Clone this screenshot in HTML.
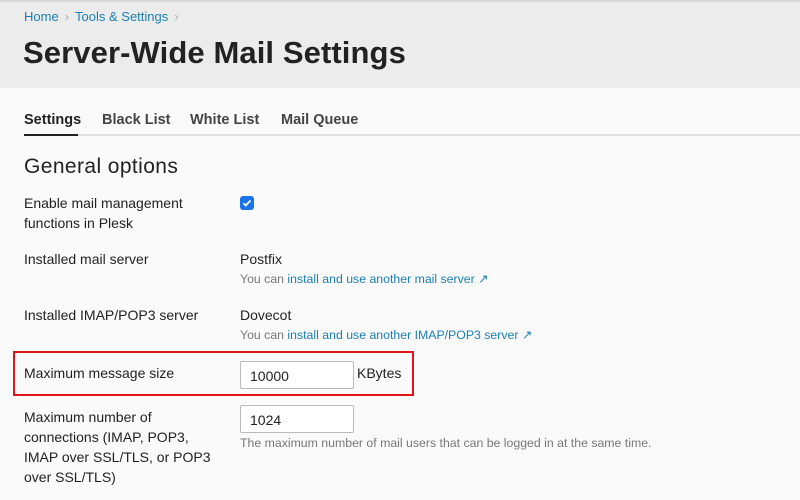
<!DOCTYPE html>
<html><head><meta charset="utf-8"><style>
*{margin:0;padding:0;box-sizing:border-box}
body{width:800px;height:500px;overflow:hidden;background:#fafafa;font-family:"Liberation Sans",sans-serif;color:#222;position:relative}
.hdr{position:absolute;left:0;top:0;width:800px;height:88px;background:#ececec;border-top:2px solid #d8d8d8}
.a{position:absolute;white-space:nowrap}
.bc{top:9px;left:24px;font-size:13px;color:#1a7fb3}
.bc span{color:#aaa;margin:0 6px}
h1{position:absolute;left:23px;top:35px;font-size:31px;font-weight:bold;color:#222;letter-spacing:0.1px}
.tabs{top:112px;font-size:14.5px;font-weight:bold;color:#444}
.line{position:absolute;left:24px;top:134px;width:776px;height:2px;background:#e1e1e1}
.act{position:absolute;left:24px;top:134px;width:54px;height:2px;background:#222}
.lbl{font-size:14px;color:#222;line-height:20px}
.hint{font-size:12.3px;color:#777}
.hint a{color:#1a7fb3;text-decoration:none}
.inp{position:absolute;width:114px;height:28px;border:1px solid #bbb;background:#fff;border-radius:2px;font-size:14px;padding:6px 9px}
.cb{position:absolute;left:240px;top:196px;width:14px;height:14px;background:#1a73e8;border-radius:3px}
.red{position:absolute;left:13px;top:351px;width:401px;height:45px;border:2px solid #e0151b}
</style></head><body>
<div class="hdr"></div>
<div class="a bc">Home<span>›</span>Tools &amp; Settings<span>›</span></div>
<h1>Server-Wide Mail Settings</h1>
<div class="a tabs" style="left:24px;color:#222">Settings</div>
<div class="a tabs" style="left:102px">Black List</div>
<div class="a tabs" style="left:190px">White List</div>
<div class="a tabs" style="left:281px">Mail Queue</div>
<div class="line"></div><div class="act"></div>
<div class="a" style="left:24px;top:155px;font-size:21px;color:#222;letter-spacing:0.4px">General options</div>
<div class="a lbl" style="left:24px;top:193px">Enable mail management<br>functions in Plesk</div>
<div class="cb"><svg width="14" height="14" viewBox="0 0 14 14"><path d="M3.5 7.2l2.3 2.3 4.7-5" stroke="#fff" stroke-width="1.8" fill="none"/></svg></div>
<div class="a lbl" style="left:24px;top:249px">Installed mail server</div>
<div class="a lbl" style="left:240px;top:249px">Postfix</div>
<div class="a hint" style="left:240px;top:272px">You can <a>install and use another mail server</a> <span style="color:#1a7fb3">↗</span></div>
<div class="a lbl" style="left:24px;top:305px">Installed IMAP/POP3 server</div>
<div class="a lbl" style="left:240px;top:305px">Dovecot</div>
<div class="a hint" style="left:240px;top:328px">You can <a>install and use another IMAP/POP3 server</a> <span style="color:#1a7fb3">↗</span></div>
<div class="red"></div>
<div class="a lbl" style="left:24px;top:363px">Maximum message size</div>
<div class="inp" style="left:240px;top:361px">10000</div>
<div class="a lbl" style="left:357px;top:363px">KBytes</div>
<div class="a lbl" style="left:24px;top:407px">Maximum number of<br>connections (IMAP, POP3,<br>IMAP over SSL/TLS, or POP3<br>over SSL/TLS)</div>
<div class="inp" style="left:240px;top:405px">1024</div>
<div class="a hint" style="left:240px;top:436px">The maximum number of mail users that can be logged in at the same time.</div>
</body></html>
